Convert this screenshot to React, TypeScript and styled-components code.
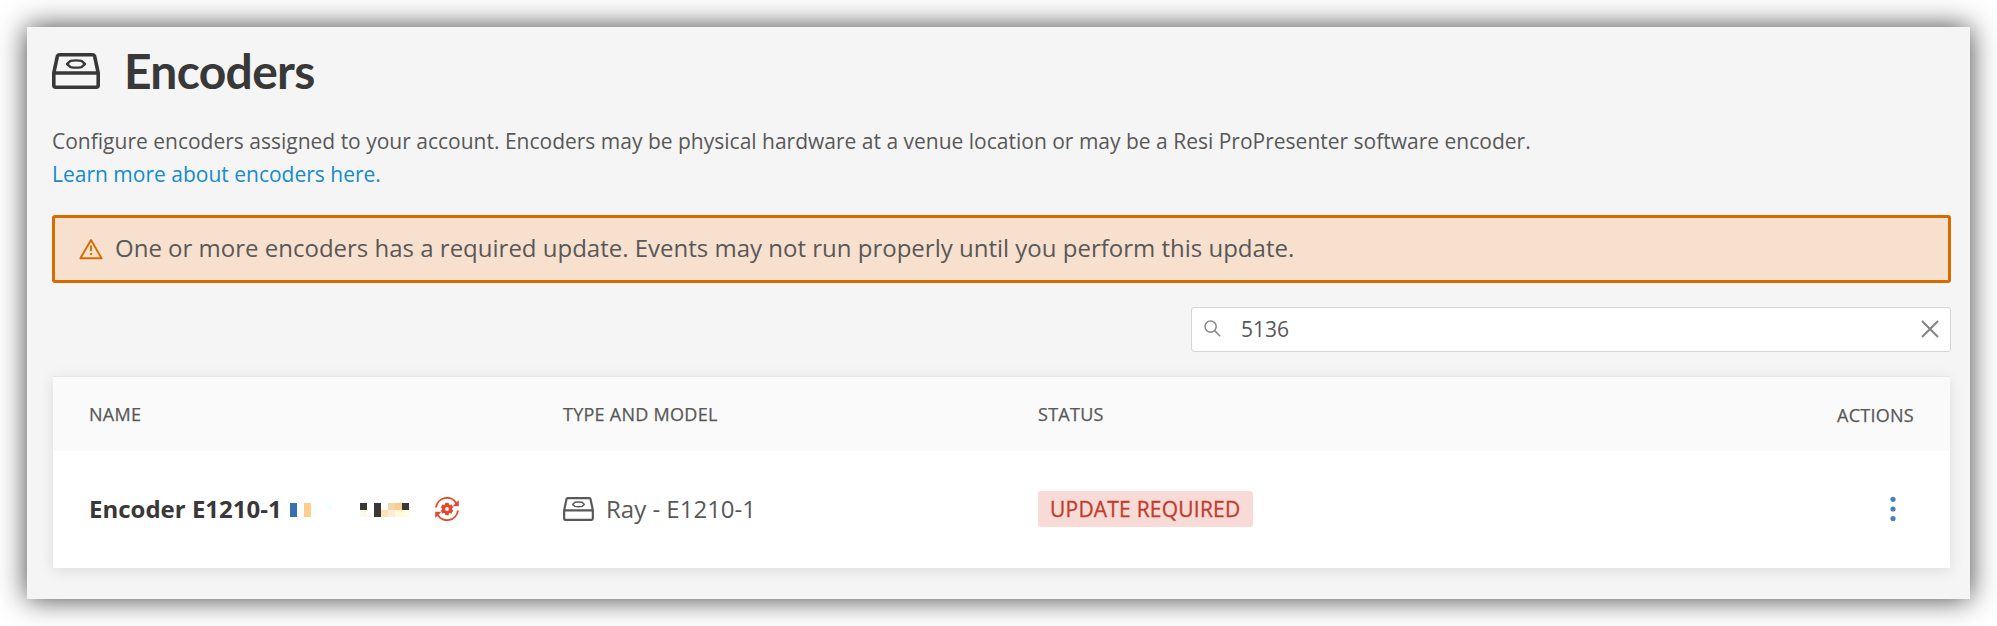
import React from "react";
import styled, { createGlobalStyle } from "styled-components";

const Global = createGlobalStyle`
  * { box-sizing: border-box; }
  body { margin: 0; background: #fff; font-family: "Open Sans", "Noto Sans", sans-serif; color: #585858; }
  svg { display: block; flex: none; }
`;

const Page = styled.main`
  width: 1997px;
  height: 626px;
  padding: 27px;
  overflow: hidden;
`;

const Panel = styled.section`
  width: 1943px;
  height: 572px;
  padding: 0 19px 0 25px;
  background: #f5f5f5;
  box-shadow: 0 0 27px rgba(0, 0, 0, 0.75);
  display: flex;
  flex-direction: column;
`;

const Heading = styled.header`
  display: flex;
  align-items: center;
  gap: 24px;
  height: 88px;
`;

const Title = styled.h1`
  margin: 0;
  font: 700 48px/60px Lato, sans-serif;
  letter-spacing: -0.7px;
  color: #383838;
`;

const Intro = styled.p`
  margin: 10px 0 0;
  font-size: 21px;
  line-height: 33px;
  height: 66px;
  white-space: nowrap;
`;

const Link = styled.a`
  display: block;
  color: #168bcb;
  text-decoration: none;
`;

const Banner = styled.div`
  margin-top: 24px;
  height: 68px;
  flex: none;
  display: flex;
  align-items: center;
  gap: 12px;
  padding: 0 24px;
  border: 3px solid #d86b00;
  border-radius: 3px;
  background: #f8e0cf;
  font-size: 24px;
  white-space: nowrap;
`;

const BannerText = styled.span`
  padding-bottom: 3px;
`;

const SearchBox = styled.label`
  align-self: flex-end;
  width: 760px;
  height: 45px;
  flex: none;
  margin-top: 24px;
  padding: 0 11px 1px 12px;
  display: flex;
  align-items: center;
  gap: 20px;
  border: 1px solid #d6d6d6;
  border-radius: 3px;
  background: #fff;
  font-size: 21px;
`;

const Query = styled.span`
  flex: 1;
`;

const SearchGlyph = styled.span`
  padding-bottom: 1px;
`;

const Card = styled.div`
  margin: 24px 1px 0 1px;
  border-top: 1px solid #e6e6e6;
  background: #fff;
  box-shadow: 0 3px 14px rgba(0, 0, 0, 0.1);
`;

const Row = styled.div<{ $head?: boolean }>`
  display: grid;
  grid-template-columns: 474px 475px 1fr auto;
  align-items: center;
  height: ${(p) => (p.$head ? 74 : 117)}px;
  padding: ${(p) => (p.$head ? "0 36px 0 36px" : "0 36px 2px 36px")};
  background: ${(p) => (p.$head ? "#fafafa" : "#fff")};
  font-size: ${(p) => (p.$head ? 18 : 24)}px;
  font-weight: ${(p) => (p.$head ? 500 : 400)};
  letter-spacing: ${(p) => (p.$head ? "0.27px" : "normal")};
  -webkit-text-stroke: ${(p) => (p.$head ? "0.25px" : "0")};
  white-space: nowrap;
`;

const Cell = styled.div<{ $gap?: number }>`
  display: flex;
  align-items: center;
  gap: ${(p) => p.$gap ?? 0}px;
`;

const Name = styled.span`
  font-weight: 700;
  font-size: 24px;
  width: 201px;
  color: #383838;
`;

const Badge = styled.span`
  height: 36px;
  width: 215px;
  padding-left: 12px;
  line-height: 36px;
  border-radius: 3px;
  background: #f8dad6;
  color: #bf3d2c;
  font-size: 21px;
  font-weight: 500;
  letter-spacing: 0.22px;
  -webkit-text-stroke: 0.3px;
`;

const Menu = styled.button`
  width: 32px;
  height: 32px;
  margin-right: 5.5px;
  padding: 0;
  border: 0;
  background: none;
`;

const DeviceIcon = ({ w, h, stroke, color }: { w: number; h: number; stroke: number; color: string }) => (
  <svg width={w} height={h} viewBox="0 0 48 36" preserveAspectRatio="none" fill="none" stroke={color} strokeWidth={stroke} strokeLinejoin="round">
    <path d="M1.8 19.8 5.4 3.2Q5.8 1.8 7.2 1.8H40.8Q42.2 1.8 42.6 3.2L46.2 19.8V32.2Q46.2 34.2 44.2 34.2H3.8Q1.8 34.2 1.8 32.2ZM1.8 20H46.2" />
    <path strokeWidth={stroke * 0.65} d="M15 11 18.5 7.9Q24 6.8 29.5 7.9L33 11 29.5 14.1Q24 15.2 18.5 14.1Z" />
  </svg>
);

const WarningIcon = () => (
  <svg width="24" height="22" viewBox="0 0 24 22" fill="none" stroke="#d86b00" strokeWidth="1.9">
    <path d="M12 2 22.6 20.3H1.4Z" strokeLinejoin="round" />
    <path d="M12 7.5v5.5M12 15v2" />
  </svg>
);

const SearchIcon = () => (
  <svg width="17" height="17" viewBox="0 0 17 17" fill="none" stroke="#8a8a8a" strokeWidth="1.5">
    <circle cx="6.6" cy="6.6" r="5.6" />
    <path d="m10.6 10.6 5.6 5.6" />
  </svg>
);

const CloseIcon = () => (
  <svg width="18" height="18" viewBox="0 0 18 18" stroke="#858585" strokeWidth="2.1">
    <path d="m1 1 16 16M17 1 1 17" />
  </svg>
);

const teeth = Array.from({ length: 6 }, (_, i) => i * 60);

const UpdateIcon = () => (
  <svg width="24" height="24" viewBox="0 0 24 24" fill="none" stroke="#e2492f" strokeWidth="1.9">
    <path d="M1 10.5A11 11 0 0 1 21.5 6.5M23 13.5A11 11 0 0 1 2.5 17.5" />
    <path fill="#e2492f" stroke="none" d="M23.8 3v6.2H17.6ZM.2 21v-6.2H6.4Z" />
    <circle cx="12" cy="12" r="3.5" strokeWidth="3.2" />
    {teeth.map((a) => (
      <path key={a} strokeWidth="3.6" d="M12 8.5V5.8" transform={`rotate(${a} 12 12)`} />
    ))}
  </svg>
);

const blocks: [number, number, number, string][] = [
  [0, 0, 2, "#376fb3"],
  [2, 0, 2, "#ffcd8f"],
  [5, 0, 1, "#f5ffff"],
  [10, 0, 1, "#383838"],
  [10, 1, 1, "#fff9e8"],
  [12, 0, 2, "#383838"],
  [13, 1, 1, "#ffe4b3"],
  [14, 0, 1, "#f3d5ae"],
  [14, 1, 1, "#ffecdc"],
  [15, 0, 1, "#ffcc8f"],
  [15, 1, 1, "#fffbd5"],
  [16, 0, 1, "#383838"],
  [16, 1, 1, "#fffee5"],
];

const Redacted = () => (
  <svg width="119" height="14" viewBox="0 0 17 2" shapeRendering="crispEdges">
    {blocks.map(([x, y, h, c]) => (
      <rect key={`${x}-${y}`} x={x} y={y} width="1" height={h} fill={c} />
    ))}
  </svg>
);

const UpdateSlot = styled.span`
  margin-left: 26px;
`;

const RedactedSlot = styled.span`
  padding-top: 3px;
`;

const ActionsLabel = styled.div`
  padding-top: 2px;
`;

export default function App() {
  return (
    <Page>
      <Global />
      <Panel>
        <Heading>
          <DeviceIcon w={48} h={36} stroke={3.6} color="#383838" />
          <Title>Encoders</Title>
        </Heading>
        <Intro>
          Configure encoders assigned to your account. Encoders may be physical hardware at a venue location or may be a Resi ProPresenter software encoder.
          <Link>Learn more about encoders here.</Link>
        </Intro>
        <Banner>
          <WarningIcon />
          <BannerText>One or more encoders has a required update. Events may not run properly until you perform this update.</BannerText>
        </Banner>
        <SearchBox>
          <SearchGlyph>
            <SearchIcon />
          </SearchGlyph>
          <Query>5136</Query>
          <CloseIcon />
        </SearchBox>
        <Card>
          <Row $head>
            <div>NAME</div>
            <div>TYPE AND MODEL</div>
            <div>STATUS</div>
            <ActionsLabel>ACTIONS</ActionsLabel>
          </Row>
          <Row>
            <Cell>
              <Name>Encoder E1210-1</Name>
              <RedactedSlot>
                <Redacted />
              </RedactedSlot>
              <UpdateSlot>
                <UpdateIcon />
              </UpdateSlot>
            </Cell>
            <Cell $gap={12}>
              <DeviceIcon w={31} h={24} stroke={3.4} color="#585858" />
              <span>Ray - E1210-1</span>
            </Cell>
            <Cell>
              <Badge>UPDATE REQUIRED</Badge>
            </Cell>
            <Menu aria-label="Actions">
              <svg width="32" height="32" fill="#4a80c0">
                <circle cx="16" cy="6.3" r="2.6" />
                <circle cx="16" cy="16" r="2.6" />
                <circle cx="16" cy="25.5" r="2.6" />
              </svg>
            </Menu>
          </Row>
        </Card>
      </Panel>
    </Page>
  );
}
